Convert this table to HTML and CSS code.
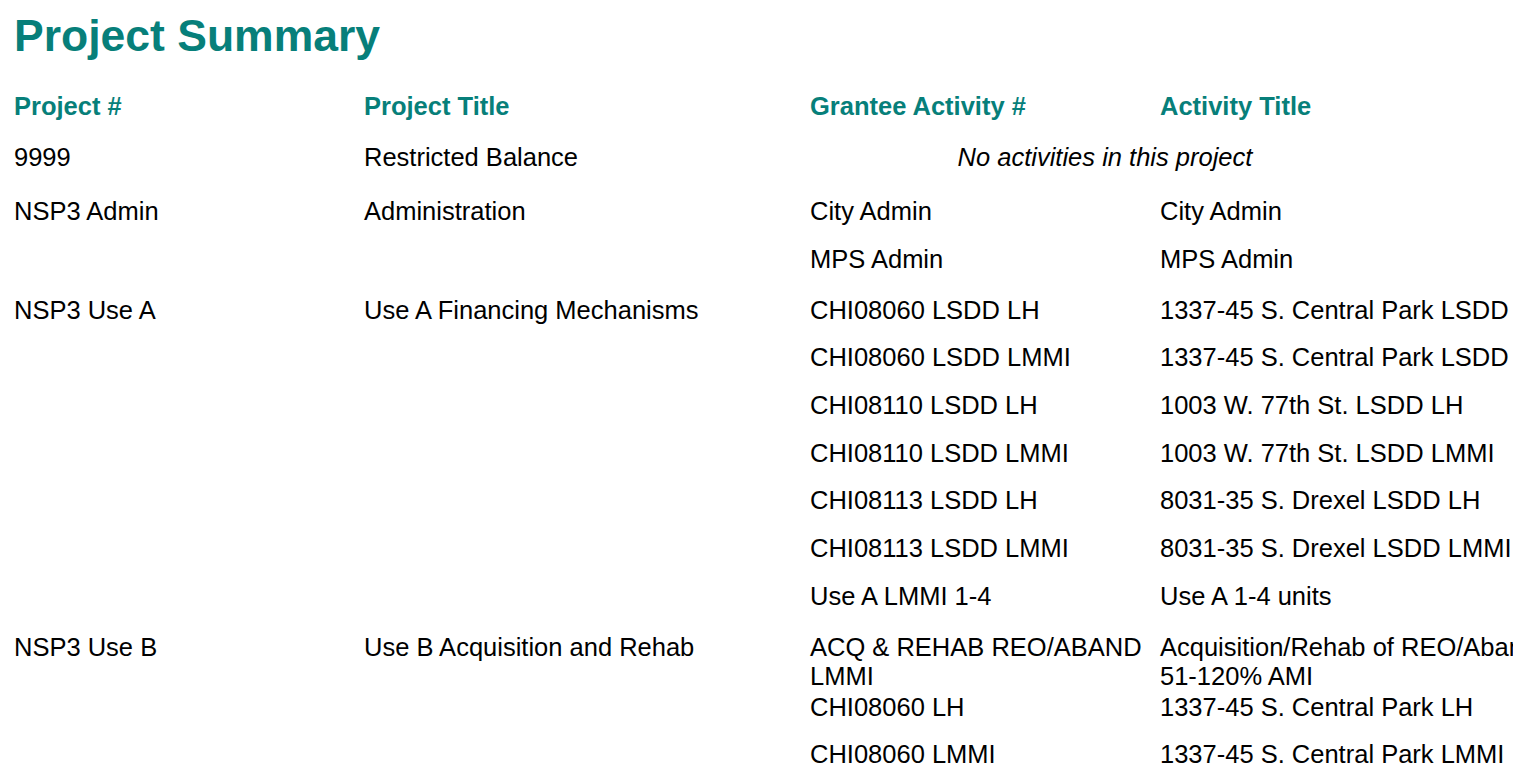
FILE: index.html
```html
<!DOCTYPE html>
<html lang="en">
<head>
<meta charset="utf-8">
<title>Project Summary</title>
<link rel="stylesheet" href="styles.css">
</head>
<body>
<h1 class="title">Project Summary</h1>
<div class="summary">
  <div class="row head">
    <div class="cell">Project #</div>
    <div class="cell">Project Title</div>
    <div class="acts">
      <div class="act head-act">
        <div class="cell">Grantee Activity #</div>
        <div class="cell">Activity Title</div>
      </div>
    </div>
  </div>

  <div class="row project empty">
    <div class="cell">9999</div>
    <div class="cell">Restricted Balance</div>
    <div class="acts">
      <div class="none">No activities in this project</div>
    </div>
  </div>

  <div class="row project">
    <div class="cell">NSP3 Admin</div>
    <div class="cell">Administration</div>
    <div class="acts">
      <div class="act"><div class="cell">City Admin</div><div class="cell">City Admin</div></div>
      <div class="act"><div class="cell">MPS Admin</div><div class="cell">MPS Admin</div></div>
    </div>
  </div>

  <div class="row project">
    <div class="cell">NSP3 Use A</div>
    <div class="cell">Use A Financing Mechanisms</div>
    <div class="acts">
      <div class="act"><div class="cell">CHI08060 LSDD LH</div><div class="cell">1337-45 S. Central Park LSDD LH</div></div>
      <div class="act"><div class="cell">CHI08060 LSDD LMMI</div><div class="cell">1337-45 S. Central Park LSDD LMMI</div></div>
      <div class="act"><div class="cell">CHI08110 LSDD LH</div><div class="cell">1003 W. 77th St. LSDD LH</div></div>
      <div class="act"><div class="cell">CHI08110 LSDD LMMI</div><div class="cell">1003 W. 77th St. LSDD LMMI</div></div>
      <div class="act"><div class="cell">CHI08113 LSDD LH</div><div class="cell">8031-35 S. Drexel LSDD LH</div></div>
      <div class="act"><div class="cell">CHI08113 LSDD LMMI</div><div class="cell">8031-35 S. Drexel LSDD LMMI</div></div>
      <div class="act"><div class="cell">Use A LMMI 1-4</div><div class="cell">Use A 1-4 units</div></div>
    </div>
  </div>

  <div class="row project">
    <div class="cell">NSP3 Use B</div>
    <div class="cell">Use B Acquisition and Rehab</div>
    <div class="acts">
      <div class="act act-multi"><div class="cell">ACQ &amp; REHAB REO/ABAND LMMI</div><div class="cell">Acquisition/Rehab of REO/Abandoned 51-120% AMI</div></div>
      <div class="act"><div class="cell">CHI08060 LH</div><div class="cell">1337-45 S. Central Park LH</div></div>
      <div class="act"><div class="cell">CHI08060 LMMI</div><div class="cell">1337-45 S. Central Park LMMI</div></div>
      <div class="act"><div class="cell">CHI08110 LH</div><div class="cell">1003 W. 77th St. LH</div></div>
    </div>
  </div>
</div>
</body>
</html>
```
FILE: styles.css
```css
html {
  overflow: hidden;
}

body {
  margin: 0;
  padding: 14px 0 0 14px;
  font-family: "Liberation Sans", Arial, sans-serif;
  color: #000;
  background: #fff;
}

.title {
  margin: 0 0 34px 0;
  font-size: 44.5px;
  line-height: 44px;
  font-weight: bold;
  color: #077f7a;
}

.summary {
  width: 1620px;
  font-size: 25.5px;
  line-height: 29px;
}

.row {
  display: grid;
  grid-template-columns: 350px 446px 810px;
  align-items: start;
}

.head {
  height: 51px;
  font-weight: bold;
  color: #077f7a;
}

.project {
  padding-bottom: 3.3px;
}

.project.empty {
  padding-bottom: 0;
  height: 54px;
}

.acts {
  display: flex;
  flex-direction: column;
}

.act {
  display: grid;
  grid-template-columns: 350px 460px;
  min-height: 47.7px;
  align-items: start;
}

.act-multi {
  padding-bottom: 2px;
}

.head-act {
  min-height: 0;
}

.none {
  width: 590px;
  text-align: center;
  font-style: italic;
}
```
